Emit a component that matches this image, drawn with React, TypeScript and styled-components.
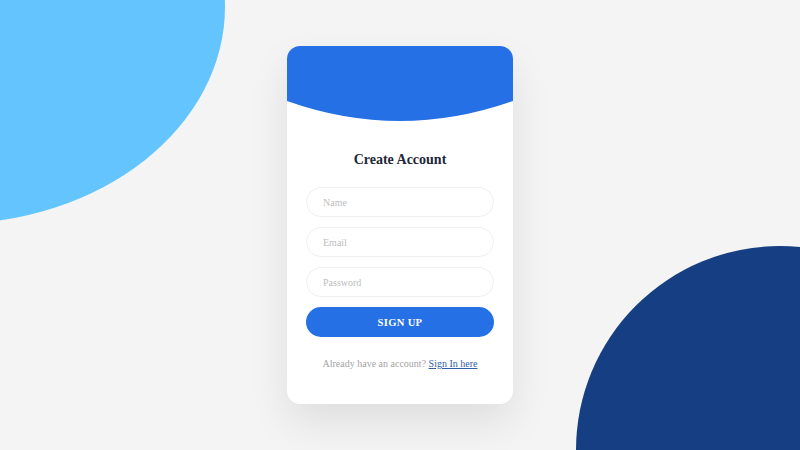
import styled, { createGlobalStyle } from 'styled-components';

// ========================
// Global + page
// ========================

const GlobalStyle = createGlobalStyle`
  html, body {
    margin: 0;
    padding: 0;
    background: #f4f4f4;
  }
  * {
    box-sizing: border-box;
  }
`;

const serif = `'Liberation Serif', 'Times New Roman', serif`;

const Stage = styled.div`
  position: relative;
  width: 800px;
  height: 450px;
  overflow: hidden;
  background: #f4f4f4;
  display: flex;
  align-items: center;
  justify-content: center;
  font-family: ${serif};
`;

const Blob = styled.div<{ $color: string; $left: number; $top: number; $w: number; $h: number }>`
  position: absolute;
  left: ${({ $left }) => $left}px;
  top: ${({ $top }) => $top}px;
  width: ${({ $w }) => $w}px;
  height: ${({ $h }) => $h}px;
  border-radius: 50%;
  background: ${({ $color }) => $color};
`;

// ========================
// Card
// ========================

const Card = styled.div`
  position: relative;
  z-index: 1;
  width: 226px;
  height: 358px;
  background: #ffffff;
  border-radius: 13px;
  overflow: hidden;
  display: flex;
  flex-direction: column;
  box-shadow: 0 18px 40px rgba(0, 0, 0, 0.09);
`;

const Header = styled.svg`
  display: block;
  width: 226px;
  height: 75px;
  flex-shrink: 0;
`;

const Body = styled.div`
  display: flex;
  flex-direction: column;
  padding: 30px 19px 0;
`;

const Title = styled.h2`
  margin: 0 0 18px;
  font-family: ${serif};
  font-size: 14px;
  line-height: 18px;
  font-weight: 700;
  text-align: center;
  color: #1e2738;
`;

const Form = styled.form`
  display: grid;
  grid-template-columns: 1fr;
  gap: 10px;
`;

const Input = styled.input`
  width: 100%;
  height: 30px;
  padding: 0 16px;
  border: 1px solid #efefef;
  border-radius: 15px;
  background: #ffffff;
  font-family: ${serif};
  font-size: 10px;
  color: #333;
  outline: none;

  &::placeholder {
    font-family: ${serif};
    color: #bdbdbd;
  }
`;

const SubmitButton = styled.button`
  height: 30px;
  border: none;
  border-radius: 15px;
  background: #2470e4;
  color: #ffffff;
  font-family: ${serif};
  font-size: 10.6px;
  font-weight: 700;
  letter-spacing: 0.3px;
  cursor: pointer;
`;

const Footer = styled.p`
  margin: 20px 0 0;
  font-size: 10px;
  line-height: 14px;
  text-align: center;
  color: #a3a3a3;

  a {
    color: #2f5fa8;
    text-decoration: underline;
  }
`;

// ========================
// Component
// ========================

const App = () => {
  return (
    <>
      <GlobalStyle />
      <Stage>
        <Blob $color="#64c5fe" $left={-325} $top={-210} $w={550} $h={434} />
        <Blob $color="#153f82" $left={576} $top={246} $w={408} $h={408} />

        <Card>
          <Header viewBox="0 0 226 75">
            <path d="M0 0 H226 V55 Q113 95 0 55 Z" fill="#2470e4" />
          </Header>
          <Body>
            <Title>Create Account</Title>
            <Form onSubmit={(e) => e.preventDefault()}>
              <Input type="text" placeholder="Name" />
              <Input type="email" placeholder="Email" />
              <Input type="password" placeholder="Password" />
              <SubmitButton type="submit">SIGN UP</SubmitButton>
            </Form>
            <Footer>
              Already have an account? <a href="#">Sign In here</a>
            </Footer>
          </Body>
        </Card>
      </Stage>
    </>
  );
};

export default App;
